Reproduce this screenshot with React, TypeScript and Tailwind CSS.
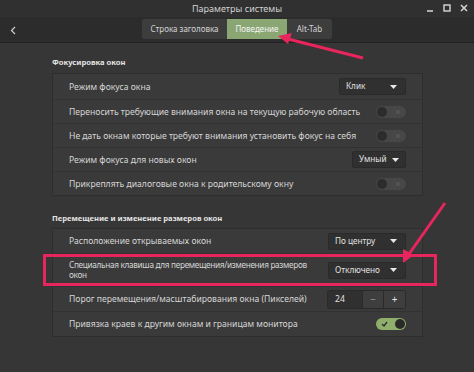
import React from "react";

const font = { fontFamily: '"Noto Sans", "Open Sans", sans-serif' };

function Dropdown({ label, w }: { label: string; w: string }) {
  return (
    <div className={`${w} shrink-0 h-[17px] bg-[#303030] border border-[#2a2a2a] rounded-[2px] flex items-center justify-between gap-[5px] pl-[6px] pr-[8px] text-[#e2e2e2] whitespace-nowrap text-[8.2px]`}>
      <span>{label}</span>
      <svg className="shrink-0" width="7" height="4" viewBox="0 0 7 4"><path d="M0 0h7L3.5 4z" fill="#e8e8e8" /></svg>
    </div>
  );
}

function Toggle({ on }: { on?: boolean }) {
  if (on)
    return (
      <div className="shrink-0 w-[30px] h-[12px] rounded-full bg-[#8fb06c] flex items-center justify-between pl-[5px] pr-[1px]">
        <svg width="7" height="6" viewBox="0 0 7 6"><path d="M1 3l2 2 3-4" stroke="#2b2b2b" strokeWidth="1.3" fill="none" /></svg>
        <div className="w-[10px] h-[10px] rounded-full bg-[#2a2a2a]" />
      </div>
    );
  return (
    <div className="shrink-0 w-[30px] h-[12px] rounded-full bg-[#474747] flex items-center justify-between pl-[1px] pr-[5px]">
      <div className="w-[10px] h-[10px] rounded-full bg-[#2c2c2c]" />
      <svg width="6" height="6" viewBox="0 0 6 6"><path d="M1 1l4 4M5 1l-4 4" stroke="#5c5c5c" strokeWidth="1" /></svg>
    </div>
  );
}

function Row({ children, right, h, first }: { children: React.ReactNode; right: React.ReactNode; h: string; first?: boolean }) {
  return (
    <div className={`${h} flex items-center justify-between pl-[16px] pr-[16px] ${first ? "" : "border-t border-[#323232]"}`}>
      <div className="text-[#d6d6d6] leading-[10px] whitespace-nowrap">{children}</div>
      {right}
    </div>
  );
}

export default function App() {
  return (
    <div className="relative w-[474px] h-[372px] bg-[#363636] overflow-hidden text-[8.6px]" style={font}>
      {/* title bar */}
      <div className="h-[17px] bg-[#303030] flex items-center justify-center relative text-[#d2d2d2] text-[9px]">
        <span>Параметры системы</span>
        <div className="absolute right-[6px] top-[4px] flex items-center gap-[9px]">
          <svg width="8" height="8" viewBox="0 0 8 8"><path d="M1 7h6" stroke="#d8d8d8" strokeWidth="1.5" /></svg>
          <svg width="8" height="8" viewBox="0 0 8 8"><rect x="1" y="1" width="6" height="6" stroke="#d8d8d8" strokeWidth="1.4" fill="none" /></svg>
          <svg width="8" height="8" viewBox="0 0 8 8"><path d="M1 1l6 6M7 1l-6 6" stroke="#d8d8d8" strokeWidth="1.5" /></svg>
        </div>
      </div>
      {/* tab bar */}
      <div className="h-[26px] bg-[#2c2c2c] flex items-center justify-center relative border-b border-[#222222] text-[8px]">
        <svg className="absolute left-[10px] top-[9px]" width="6" height="9" viewBox="0 0 6 9"><path d="M5 1L1.5 4.5 5 8" stroke="#cfcfcf" strokeWidth="1.2" fill="none" /></svg>
        <div className="flex h-[20px] mt-[-1px]">
          <div className="w-[85px] bg-[#3d3d3d] flex items-center justify-center text-[#d4d4d4] rounded-l-[2px]">Строка заголовка</div>
          <div className="w-[60px] bg-[#8aa673] flex items-center justify-center text-[#f4f4f4]">Поведение</div>
          <div className="w-[45px] bg-[#3d3d3d] flex items-center justify-center text-[#d4d4d4] rounded-r-[2px]">Alt-Tab</div>
        </div>
      </div>
      {/* content */}
      <div className="pl-[52px] pr-[51px] pt-[12px]">
        <div className="h-[14px] leading-[14px] font-bold text-[#e4e4e4] mb-[4px] text-[7.6px]">Фокусировка окон</div>
        <div className="bg-[#3a3a3a] border border-[#2e2e2e]">
          <Row first h="h-[25px]" right={<Dropdown label="Клик" w="w-[67px]" />}>Режим фокуса окна</Row>
          <Row h="h-[24px]" right={<Toggle />}>Переносить требующие внимания окна на текущую рабочую область</Row>
          <Row h="h-[24px]" right={<Toggle />}>Не дать окнам которые требуют внимания установить фокус на себя</Row>
          <Row h="h-[24px]" right={<Dropdown label="Умный" w="w-[54px]" />}>Режим фокуса для новых окон</Row>
          <Row h="h-[24px]" right={<Toggle />}>Прикреплять диалоговые окна к родительскому окну</Row>
        </div>
        <div className="h-[14px] leading-[14px] font-bold text-[#e4e4e4] mt-[15px] mb-[3px] text-[7.6px]">Перемещение и изменение размеров окон</div>
        <div className="bg-[#3a3a3a] border border-[#2e2e2e]">
          <Row first h="h-[24px]" right={<Dropdown label="По центру" w="w-[78px]" />}>Расположение открываемых окон</Row>
          <Row h="h-[33px]" right={<Dropdown label="Отключено" w="w-[78px]" />}>
            <div className="text-[8.2px] tracking-[-0.3px]">
              <div>Специальная клавиша для перемещения/изменения размеров</div>
              <div>окон</div>
            </div>
          </Row>
          <Row h="h-[25px]" right={
            <div className="shrink-0 flex h-[19px] border border-[#2a2a2a] rounded-[2px] text-[#e2e2e2]">
              <div className="w-[35px] bg-[#303030] flex items-center pl-[7px] border-r border-[#2a2a2a]">24</div>
              <div className="w-[21px] bg-[#3e3e3e] flex items-center justify-center border-r border-[#2a2a2a] text-[#9a9a9a] text-[10px]">−</div>
              <div className="w-[21px] bg-[#3e3e3e] flex items-center justify-center text-[#e0e0e0] text-[10px]">+</div>
            </div>
          }>Порог перемещения/масштабирования окна (Пикселей)</Row>
          <Row h="h-[25px]" right={<Toggle on />}>Привязка краев к другим окнам и границам монитора</Row>
        </div>
      </div>
      {/* annotations */}
      <div className="absolute left-[43px] top-[254px] w-[394px] h-[32px] border-[3px] border-[#e8255c]" />
      <svg className="absolute left-0 top-0" width="474" height="372" viewBox="0 0 474 372">
        <line x1="363" y1="58" x2="288" y2="39" stroke="#e8255c" strokeWidth="3" />
        <path d="M278 36 L292 33 L288 44 Z" fill="#e8255c" />
        <line x1="445" y1="203" x2="409" y2="254" stroke="#e8255c" strokeWidth="3" />
        <path d="M403 263 L403 249 L414 255 Z" fill="#e8255c" />
      </svg>
    </div>
  );
}
